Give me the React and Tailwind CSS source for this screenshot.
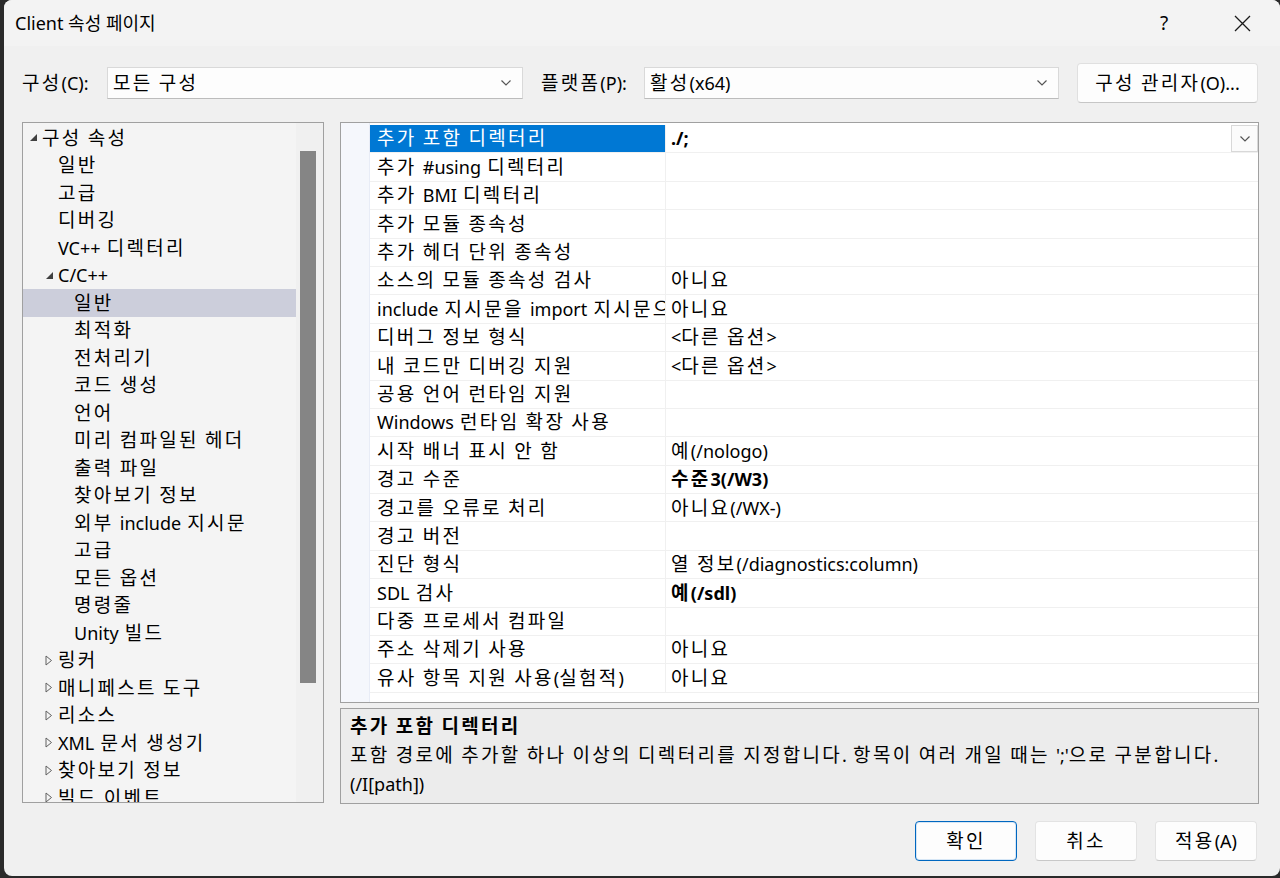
import { useState } from 'react';

const FONT = { fontFamily: '"Noto Sans", "Noto Sans CJK KR", sans-serif' };

const tree = [
  { label: '구성 속성', level: 0, arrow: 'open' },
  { label: '일반', level: 1 },
  { label: '고급', level: 1 },
  { label: '디버깅', level: 1 },
  { label: 'VC++ 디렉터리', level: 1 },
  { label: 'C/C++', level: 1, arrow: 'open' },
  { label: '일반', level: 2, selected: true },
  { label: '최적화', level: 2 },
  { label: '전처리기', level: 2 },
  { label: '코드 생성', level: 2 },
  { label: '언어', level: 2 },
  { label: '미리 컴파일된 헤더', level: 2 },
  { label: '출력 파일', level: 2 },
  { label: '찾아보기 정보', level: 2 },
  { label: '외부 include 지시문', level: 2 },
  { label: '고급', level: 2 },
  { label: '모든 옵션', level: 2 },
  { label: '명령줄', level: 2 },
  { label: 'Unity 빌드', level: 2 },
  { label: '링커', level: 1, arrow: 'closed' },
  { label: '매니페스트 도구', level: 1, arrow: 'closed' },
  { label: '리소스', level: 1, arrow: 'closed' },
  { label: 'XML 문서 생성기', level: 1, arrow: 'closed' },
  { label: '찾아보기 정보', level: 1, arrow: 'closed' },
  { label: '빌드 이벤트', level: 1, arrow: 'closed' },
];

const props = [
  ['추가 포함 디렉터리', './;', true],
  ['추가 #using 디렉터리', ''],
  ['추가 BMI 디렉터리', ''],
  ['추가 모듈 종속성', ''],
  ['추가 헤더 단위 종속성', ''],
  ['소스의 모듈 종속성 검사', '아니요'],
  ['include 지시문을 import 지시문으로 변환', '아니요'],
  ['디버그 정보 형식', '<다른 옵션>'],
  ['내 코드만 디버깅 지원', '<다른 옵션>'],
  ['공용 언어 런타임 지원', ''],
  ['Windows 런타임 확장 사용', ''],
  ['시작 배너 표시 안 함', '예(/nologo)'],
  ['경고 수준', '수준3(/W3)', true],
  ['경고를 오류로 처리', '아니요(/WX-)'],
  ['경고 버전', ''],
  ['진단 형식', '열 정보(/diagnostics:column)'],
  ['SDL 검사', '예(/sdl)', true],
  ['다중 프로세서 컴파일', ''],
  ['주소 삭제기 사용', '아니요'],
  ['유사 항목 지원 사용(실험적)', '아니요'],
];

// Malgun Gothic sets hangul (and its spaces) wider than Noto CJK, so widen those runs
function K({ children }) {
  const parts = String(children).split(/([\uAC00-\uD7A3]+| +)/);
  return (
    <span>
      {parts.map((p, i) =>
        /[\uAC00-\uD7A3]/.test(p) ? (
          <span key={i} className="text-[19px] tracking-[2.3px]">
            {p}
          </span>
        ) : p.startsWith(' ') ? (
          <span key={i} className="tracking-[1.5px]">
            {p}
          </span>
        ) : (
          <span key={i}>{p}</span>
        )
      )}
    </span>
  );
}

function Chevron() {
  return (
    <svg width="12" height="8" viewBox="0 0 12 8">
      <path d="M1.5 1.5 L6 6 L10.5 1.5" fill="none" stroke="#555" strokeWidth="1.2" />
    </svg>
  );
}

function Arrow({ type }) {
  if (type === 'open') {
    return (
      <svg width="9" height="9" viewBox="0 0 9 9">
        <path d="M8 1 L8 8 L1 8 Z" fill="#404040" />
      </svg>
    );
  }
  return (
    <svg width="8" height="11" viewBox="0 0 8 11">
      <path d="M1 1 L6.5 5.5 L1 10 Z" fill="none" stroke="#606060" strokeWidth="1" />
    </svg>
  );
}

function Select({ value, width }) {
  return (
    <div className={`flex h-[32px] items-center justify-between border border-[#d9d9d9] border-b-[#bcbcbc] bg-[#fdfdfd] pl-[5px] pr-[10px] ${width}`}>
      <span className="whitespace-nowrap text-[18px] text-black">
        <K>{value}</K>
      </span>
      <Chevron />
    </div>
  );
}

function DialogButton({ children, primary }) {
  return (
    <button
      className={`h-[40px] w-[102px] rounded-[4px] bg-[#fdfdfd] text-[18px] text-black ${
        primary ? 'border border-[#0067c0] shadow-[inset_0_0_0_1px_#d6e6f5]' : 'border border-[#e3e3e3] border-b-[#c8c8c8]'
      }`}
    >
      <K>{children}</K>
    </button>
  );
}

export default function App() {
  const [selectedProp, setSelectedProp] = useState(0);
  const current = props[selectedProp];

  return (
    <div className="h-[878px] w-[1280px] overflow-hidden bg-[#2a2a2a] pl-[4px]" style={FONT}>
      <div className="flex h-[876px] flex-col rounded-[8px] bg-[#f0f0f0]">
        {/* title bar */}
        <div className="flex h-[46px] items-center justify-between rounded-t-[8px] bg-[#f3f3f3] pl-[11px]">
          <span className="text-[18px] text-black">Client 속성 페이지</span>
          <div className="flex items-center">
            <span className="w-[80px] text-center text-[19px] text-black">?</span>
            <span className="flex w-[76px] justify-center">
              <svg width="17" height="17" viewBox="0 0 17 17">
                <path d="M1 1 L16 16 M16 1 L1 16" stroke="#1a1a1a" strokeWidth="1.3" />
              </svg>
            </span>
          </div>
        </div>

        {/* config row */}
        <div className="mt-[17px] flex items-center pl-[18px]">
          <span className="w-[85px] whitespace-nowrap text-[18px] text-black">
            <K>구성(C):</K>
          </span>
          <Select value="모든 구성" width="w-[416px]" />
          <span className="ml-[18px] w-[103px] whitespace-nowrap text-[18px] text-black">
            <K>플랫폼(P):</K>
          </span>
          <Select value="활성(x64)" width="w-[415px]" />
          <button className="ml-[18px] h-[40px] w-[181px] whitespace-nowrap rounded-[4px] border border-[#e0e0e0] border-b-[#c6c6c6] bg-[#fdfdfd] text-[18px] text-black">
            <K>구성 관리자(O)...</K>
          </button>
        </div>

        {/* main area */}
        <div className="mt-[19px] flex pl-[18px]">
          {/* tree */}
          <div className="flex h-[681px] w-[302px] border border-[#a0a0a0] bg-[#f4f4f4]">
            <div className="flex-1 overflow-hidden pt-[1px]">
              {tree.map((item, i) => (
                <div
                  key={i}
                  className={`flex h-[27.5px] items-center whitespace-nowrap text-[18px] text-black ${item.selected ? 'bg-[#cccedb]' : ''}`}
                  style={{ paddingLeft: item.level === 0 ? 6 : item.level === 1 ? (item.arrow ? 22 : 35) : 51 }}
                >
                  {item.arrow && (
                    <span className="flex w-[13px] items-center">
                      <Arrow type={item.arrow} />
                    </span>
                  )}
                  <K>{item.label}</K>
                </div>
              ))}
            </div>
            <div className="w-[27px] bg-[#f0f0f0] pl-[4px] pt-[28px]">
              <div className="h-[532px] w-[16px] bg-[#858585]" />
            </div>
          </div>

          {/* right side */}
          <div className="ml-[16px] flex flex-col">
            <div className="flex h-[581px] w-[919px] border border-[#a0a0a0] bg-white">
              <div className="w-[29px] border-r border-[#e8ecf6] bg-[#f5f7fc]" />
              <div className="flex-1 pt-[2px]">
                {props.map(([name, value, bold], i) => (
                  <div
                    key={i}
                    onClick={() => setSelectedProp(i)}
                    className="flex h-[28.4px] border-b border-[#f0f0f0] text-[18px] text-black"
                  >
                    <div
                      className={`flex w-[296px] shrink-0 items-center overflow-hidden whitespace-nowrap border-r border-[#f0f0f0] pl-[7px] ${
                        selectedProp === i ? 'bg-[#0078d4] text-white' : ''
                      }`}
                    >
                      <K>{name}</K>
                    </div>
                    <div className={`flex flex-1 items-center justify-between whitespace-nowrap pl-[5px] ${bold ? 'font-bold' : ''}`}>
                      <K>{value}</K>
                      {selectedProp === i && (
                        <span className="flex h-[27px] w-[27px] items-center justify-center border border-[#d8d8d8] bg-[#fbfbfb]">
                          <Chevron />
                        </span>
                      )}
                    </div>
                  </div>
                ))}
              </div>
            </div>

            <div className="mt-[5px] flex h-[96px] w-[919px] flex-col border border-[#a0a0a0] bg-[#ececec] px-[9px] pt-[3px] text-[18px] leading-[29px] text-black">
              <span className="whitespace-nowrap font-bold">
                <K>{current[0]}</K>
              </span>
              <span className="whitespace-nowrap">
                <K>포함 경로에 추가할 하나 이상의 디렉터리를 지정합니다. 항목이 여러 개일 때는 ';'으로 구분합니다.</K>
              </span>
              <span>(/I[path])</span>
            </div>
          </div>
        </div>

        {/* footer buttons */}
        <div className="mt-[17px] flex justify-end gap-[18px] pr-[23px]">
          <DialogButton primary>확인</DialogButton>
          <DialogButton>취소</DialogButton>
          <DialogButton>적용(A)</DialogButton>
        </div>
      </div>
    </div>
  );
}
